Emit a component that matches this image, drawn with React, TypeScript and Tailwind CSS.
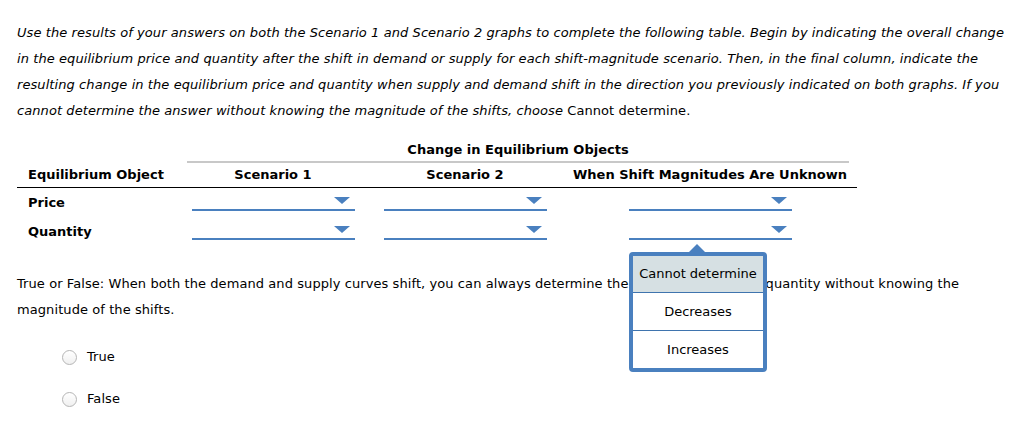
import React from "react";

function Dropdown() {
  return (
    <div className="relative w-[163px] h-[23px] border-b-2 border-[#4a80bf]">
      <div className="absolute right-[5px] top-[9px] w-0 h-0 border-l-[8px] border-r-[8px] border-t-[7px] border-l-transparent border-r-transparent border-t-[#4a80bf]" />
    </div>
  );
}

function Radio({ label }: { label: string }) {
  return (
    <div className="flex items-center h-[26px] pl-[62px]">
      <div className="w-[15px] h-[15px] rounded-full border border-[#b5b5b5] bg-gradient-to-b from-white to-[#f0f0f0]" />
      <span className="ml-[10px] not-italic">{label}</span>
    </div>
  );
}

export default function App() {
  return (
    <div className="w-[1024px] h-[439px] bg-white text-black text-[13px] tracking-[0.08px] font-['DejaVu_Sans',Verdana,sans-serif] overflow-hidden">
      <p className="pl-[17px] pt-[20px] leading-[26px] italic whitespace-nowrap">
        Use the results of your answers on both the Scenario 1 and Scenario 2 graphs to complete the following table. Begin by indicating the overall change
        <br />
        in the equilibrium price and quantity after the shift in demand or supply for each shift-magnitude scenario. Then, in the final column, indicate the
        <br />
        resulting change in the equilibrium price and quantity when supply and demand shift in the direction you previously indicated on both graphs. If you
        <br />
        cannot determine the answer without knowing the magnitude of the shifts, choose <span className="not-italic">Cannot determine.</span>
      </p>

      <div className="ml-[17px] mt-[15px] w-[840px] font-bold tracking-normal">
        <div className="grid grid-cols-[170px_662px_8px]">
          <div />
          <div className="h-[24px] flex items-center justify-center border-b-2 border-[#c8c8c8]">
            Change in Equilibrium Objects
          </div>
          <div />
        </div>
        <div className="grid grid-cols-[170px_172px_212px_278px_8px] h-[25px] items-center border-b border-black">
          <div className="pl-[11px]">Equilibrium Object</div>
          <div className="text-center">Scenario 1</div>
          <div className="text-center">Scenario 2</div>
          <div className="text-center">When Shift Magnitudes Are Unknown</div>
          <div />
        </div>
        <div className="grid grid-cols-[170px_172px_212px_278px_8px] h-[29px]">
          <div className="pl-[11px] flex items-center">Price</div>
          <div className="flex justify-center"><Dropdown /></div>
          <div className="flex justify-center"><Dropdown /></div>
          <div className="flex justify-center"><Dropdown /></div>
          <div />
        </div>
        <div className="grid grid-cols-[170px_172px_212px_278px_8px] h-[29px]">
          <div className="pl-[11px] flex items-center">Quantity</div>
          <div className="flex justify-center"><Dropdown /></div>
          <div className="flex justify-center"><Dropdown /></div>
          <div className="flex justify-center relative">
            <Dropdown />
            <div className="absolute left-[58px] top-[27px] z-10 font-normal">
              <div className="ml-[60px] w-0 h-0 border-l-[8px] border-r-[8px] border-b-[8px] border-l-transparent border-r-transparent border-b-[#4a80bf]" />
              <div className="w-[138px] rounded-[4px] border-4 border-[#4a80bf] bg-white overflow-hidden">
                <div className="h-[37px] flex items-center justify-center bg-[#d6e0e3] border-b border-[#3f74ae]">Cannot determine</div>
                <div className="h-[38px] flex items-center justify-center border-b border-[#3f74ae]">Decreases</div>
                <div className="h-[37px] flex items-center justify-center">Increases</div>
              </div>
            </div>
          </div>
          <div />
        </div>
      </div>

      <p className="pl-[17px] mt-[25px] leading-[26px] whitespace-nowrap">
        True or False: When both the demand and supply curves shift, you can always determine the<span className="invisible tracking-[-0.42px]"> equilibrium price and </span>quantity without knowing the
        <br />
        magnitude of the shifts.
      </p>
      <div className="mt-[21px] flex flex-col gap-[16px]">
        <Radio label="True" />
        <Radio label="False" />
      </div>
    </div>
  );
}
